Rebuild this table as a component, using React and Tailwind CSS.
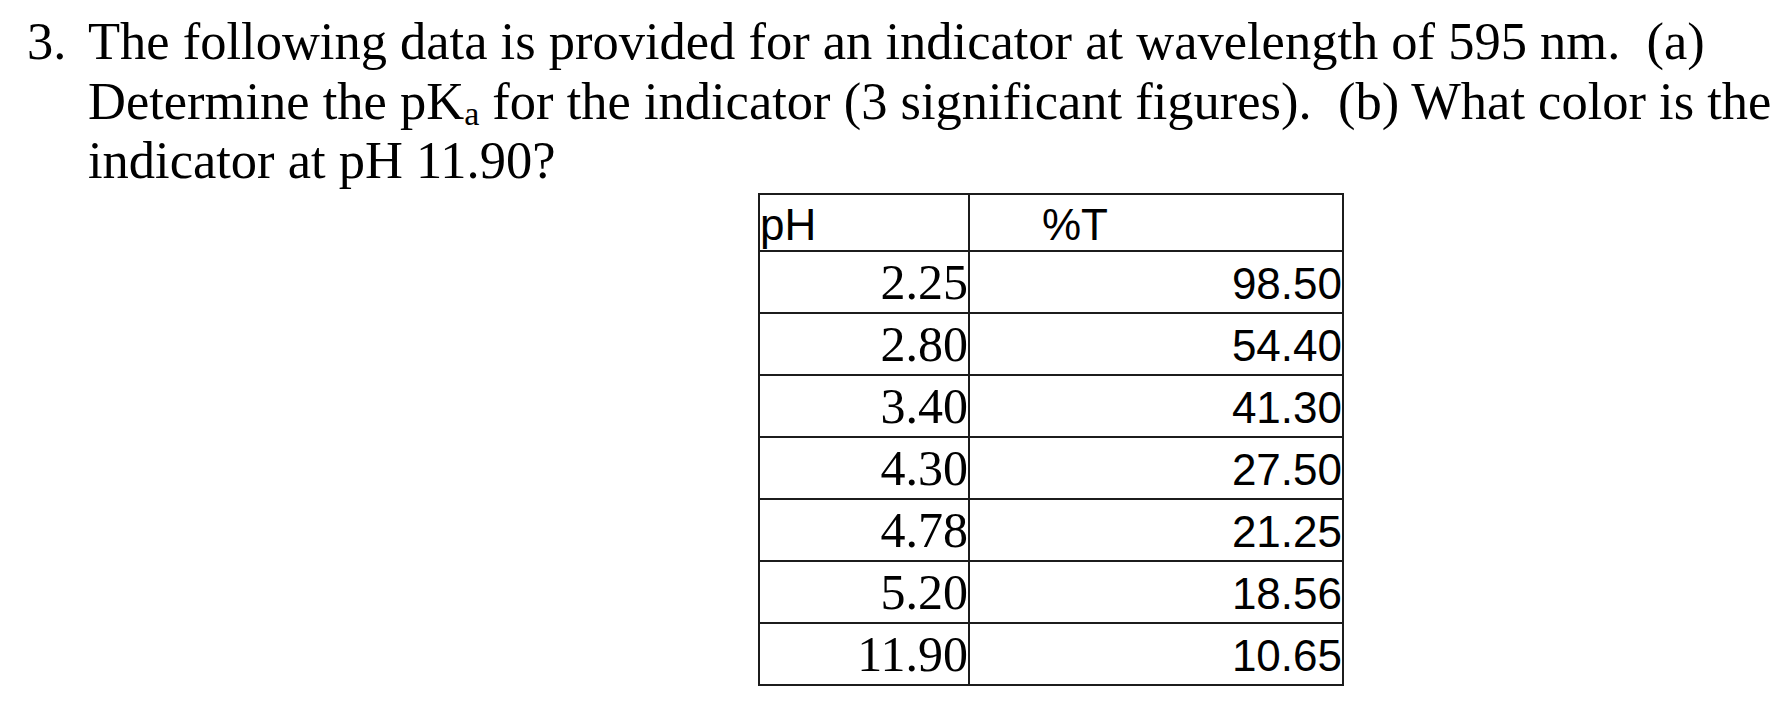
import React from "react";

const rows = [
  ["2.25", "98.50"],
  ["2.80", "54.40"],
  ["3.40", "41.30"],
  ["4.30", "27.50"],
  ["4.78", "21.25"],
  ["5.20", "18.56"],
  ["11.90", "10.65"],
];

export default function App() {
  return (
    <div className="w-[1782px] h-[715px] bg-white text-black overflow-hidden">
      <div className="flex pl-[27px] pt-[12px] text-[52.5px] leading-[59.5px] whitespace-nowrap font-['Liberation_Serif',serif]">
        <div className="w-[61px] shrink-0">3.</div>
        <div className="flex flex-col">
          <div className="h-[59.5px]">The following data is provided for an indicator at wavelength of 595 nm.&nbsp; (a)</div>
          <div className="h-[59.5px]">
            Determine the pK<span className="text-[34px] leading-[0] align-[-6px]">a</span> for the indicator (3 significant figures).&nbsp; (b) What color is the
          </div>
          <div className="h-[59.5px]">indicator at pH 11.90?</div>
        </div>
      </div>

      <div className="ml-[758px] mt-[2px] w-[586px] border-2 border-[#1c1c1c] flex flex-col">
        <div className="flex h-[55px] font-['Liberation_Sans',sans-serif] text-[44px] leading-none">
          <div className="w-[208px] shrink-0 pt-[8px]">pH</div>
          <div className="flex-1 border-l-2 border-[#1c1c1c] pt-[8px] pl-[72px]">%T</div>
        </div>
        {rows.map(([ph, t]) => (
          <div key={ph} className="flex h-[62px] border-t-2 border-[#1c1c1c]">
            <div className="w-[208px] shrink-0 pt-[5px] text-right text-[50px] leading-none font-['Liberation_Serif',serif]">
              {ph}
            </div>
            <div className="flex-1 border-l-2 border-[#1c1c1c] pt-[10px] text-right text-[44px] leading-none font-['Liberation_Sans',sans-serif]">
              {t}
            </div>
          </div>
        ))}
      </div>
    </div>
  );
}
